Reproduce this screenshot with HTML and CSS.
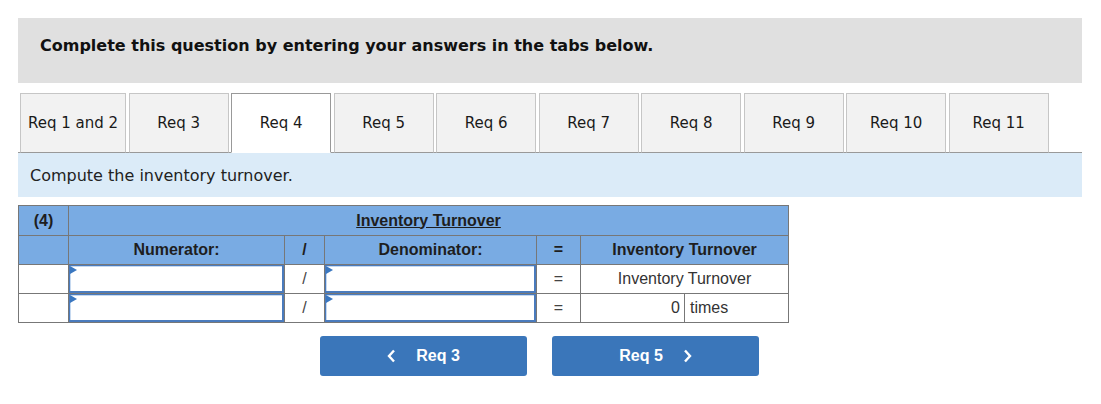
FILE: index.html
```html
<!DOCTYPE html>
<html lang="en">
<head>
  <meta charset="UTF-8" />
  <title>Inventory Turnover</title>
  <link rel="stylesheet" href="styles.css">
</head>
<body>
  <div class="page">
    <div class="prompt">Complete this question by entering your answers in the tabs below.</div>

    <div class="tabs">
      <div class="tab">Req 1 and 2</div>
      <div class="tab">Req 3</div>
      <div class="tab active">Req 4</div>
      <div class="tab">Req 5</div>
      <div class="tab">Req 6</div>
      <div class="tab">Req 7</div>
      <div class="tab">Req 8</div>
      <div class="tab">Req 9</div>
      <div class="tab">Req 10</div>
      <div class="tab">Req 11</div>
    </div>

    <div class="instruction">Compute the inventory turnover.</div>

    <table class="ratio">
      <colgroup>
        <col class="c-label">
        <col class="c-num">
        <col class="c-op">
        <col class="c-den">
        <col class="c-eq">
        <col class="c-res">
        <col class="c-unit">
      </colgroup>
      <tr class="head title-row">
        <th>(4)</th>
        <th colspan="6"><u>Inventory Turnover</u></th>
      </tr>
      <tr class="head">
        <th></th>
        <th>Numerator:</th>
        <th>/</th>
        <th>Denominator:</th>
        <th>=</th>
        <th colspan="2">Inventory Turnover</th>
      </tr>
      <tr>
        <td></td>
        <td class="entry"><span class="flag"></span><input type="text"></td>
        <td class="op">/</td>
        <td class="entry"><span class="flag"></span><input type="text"></td>
        <td class="op">=</td>
        <td colspan="2" class="center">Inventory Turnover</td>
      </tr>
      <tr>
        <td></td>
        <td class="entry"><span class="flag"></span><input type="text"></td>
        <td class="op">/</td>
        <td class="entry"><span class="flag"></span><input type="text"></td>
        <td class="op">=</td>
        <td class="value">0</td>
        <td class="unit">times</td>
      </tr>
    </table>

    <div class="nav">
      <button class="nav-btn">
        <svg width="9" height="14" viewBox="0 0 9 14"><polyline points="7,1.5 2,7 7,12.5" fill="none" stroke="#fff" stroke-width="2.4"/></svg>
        <span>Req 3</span>
      </button>
      <button class="nav-btn">
        <span>Req 5</span>
        <svg width="9" height="14" viewBox="0 0 9 14"><polyline points="2,1.5 7,7 2,12.5" fill="none" stroke="#fff" stroke-width="2.4"/></svg>
      </button>
    </div>
  </div>
</body>
</html>
```

FILE: styles.css
```css
body {
  margin: 0;
  background: #fff;
  color: #222;
  font-family: "DejaVu Sans", Verdana, sans-serif;
}

.page {
  width: 1064px;
  padding: 18px;
}

.prompt {
  background: #e0e0e0;
  height: 65px;
  box-sizing: border-box;
  padding: 19px 22px;
  font-size: 16px;
  line-height: 18px;
  font-weight: bold;
  color: #111;
}

.tabs {
  display: flex;
  gap: 2.5px;
  margin-top: 10px;
  padding-left: 2px;
  border-bottom: 1px solid #999;
}

.tab {
  min-width: 100px;
  height: 60px;
  box-sizing: border-box;
  padding: 0 7px;
  margin-bottom: -1px;
  display: flex;
  align-items: center;
  justify-content: center;
  background: #f2f2f2;
  border: 1px solid #c6c6c6;
  border-bottom-color: #999;
  font-size: 15px;
  color: #1a1a1a;
  white-space: nowrap;
}

.tab.active {
  background: #fff;
  border-color: #999;
  border-bottom-color: #fff;
}

.instruction {
  background: #dbebf8;
  height: 44px;
  box-sizing: border-box;
  padding: 1px 12px 0;
  display: flex;
  align-items: center;
  font-size: 16px;
  color: #222;
}

.ratio {
  margin-top: 8px;
  border-collapse: collapse;
  width: 770px;
  table-layout: fixed;
  font-family: "Liberation Sans", Arial, sans-serif;
  font-size: 16px;
}

.c-label { width: 50px; }
.c-num { width: 216px; }
.c-op { width: 40px; }
.c-den { width: 212px; }
.c-eq { width: 44px; }
.c-res { width: 104px; }
.c-unit { width: 104px; }

.ratio th,
.ratio td {
  border: 1px solid #777;
  padding: 0;
  height: 28px;
  text-align: center;
}

.ratio th {
  background: #79abe3;
  color: #1e1e1e;
  font-weight: bold;
}

.ratio .title-row th {
  height: 29px;
}

.ratio td {
  color: #333;
}

.ratio td.op {
  color: #444;
}

.ratio td.value {
  text-align: right;
  padding-right: 4px;
}

.ratio td.unit {
  text-align: left;
  padding-left: 5px;
}

.entry {
  position: relative;
}

.entry input {
  display: block;
  width: 100%;
  height: 28px;
  box-sizing: border-box;
  margin: 0;
  border: 1px solid #4a7bbd;
  border-width: 1px 2px 2px 1px;
  box-shadow: inset 1px 1px 0 #c6d9f0;
  background: #fff;
  font: inherit;
}

.flag {
  position: absolute;
  left: 1px;
  top: 1px;
  width: 0;
  height: 0;
  border-top: 4px solid transparent;
  border-bottom: 4px solid transparent;
  border-left: 7px solid #3a77c0;
}

.nav {
  display: flex;
  gap: 25px;
  margin-top: 13px;
  padding-left: 302px;
}

.nav-btn {
  width: 207px;
  height: 40px;
  display: flex;
  align-items: center;
  justify-content: center;
  gap: 20px;
  background: #3a76ba;
  border: none;
  border-radius: 3px;
  color: #fff;
  font-family: "Liberation Sans", Arial, sans-serif;
  font-size: 16px;
  font-weight: bold;
}
```
